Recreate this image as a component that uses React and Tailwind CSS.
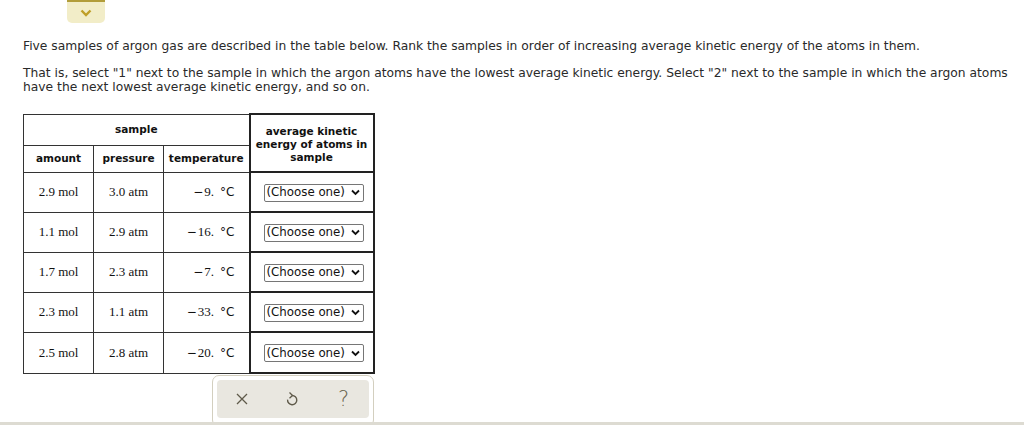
import React from "react";

const rows = [
  ["2.9 mol", "3.0 atm", "9."],
  ["1.1 mol", "2.9 atm", "16."],
  ["1.7 mol", "2.3 atm", "7."],
  ["2.3 mol", "1.1 atm", "33."],
  ["2.5 mol", "2.8 atm", "20."],
];

function Select() {
  return (
    <div className="inline-flex items-center h-[18px] w-[100px] border border-[#767676] rounded-[2px] bg-white pl-[2px] pr-[3px] text-[11.8px] text-[#111] font-['DejaVu_Sans',sans-serif] leading-none">
      <span className="flex-1 text-left">(Choose one)</span>
      <svg width="9" height="7" viewBox="0 0 9 7" className="ml-[1px]">
        <path d="M1 1.5 L4.5 5 L8 1.5" fill="none" stroke="#111" strokeWidth="1.8" />
      </svg>
    </div>
  );
}

export default function App() {
  return (
    <div className="relative w-[1024px] h-[425px] bg-white overflow-hidden font-['DejaVu_Sans',Verdana,sans-serif] text-[#2a2a2a]">
      <div className="ml-[67px] w-[38px] h-[23px] bg-[#f2edc8] rounded-b-[5px] border-t-[2px] border-[#b29d3a] flex items-center justify-center">
        <svg width="12" height="8" viewBox="0 0 12 8">
          <path d="M1.5 1.5 L6 6 L10.5 1.5" fill="none" stroke="#bf9f28" strokeWidth="2.4" />
        </svg>
      </div>
      <div className="pl-[23px] pr-[10px] text-[12.3px] leading-[14px]">
        <p className="mt-[16px]">Five samples of argon gas are described in the table below. Rank the samples in order of increasing average kinetic energy of the atoms in them.</p>
        <p className="mt-[13px]">That is, select "1" next to the sample in which the argon atoms have the lowest average kinetic energy. Select "2" next to the sample in which the argon atoms have the next lowest average kinetic energy, and so on.</p>
      </div>
      <table className="ml-[23px] mt-[19px] border-collapse border border-[#333] text-[#111]">
        <thead>
          <tr className="h-[31px]">
            <th colSpan={3} className="border border-[#333] text-[10.5px] font-bold align-top pt-[7px]">sample</th>
            <th rowSpan={2} className="w-[124px] border-2 border-[#222] text-[10.5px] font-bold leading-[13px] align-top pt-[10px]">
              average kinetic<br />energy of atoms in<br />sample
            </th>
          </tr>
          <tr className="h-[27px]">
            <th className="w-[70px] border border-[#333] text-[10.5px] font-bold">amount</th>
            <th className="w-[70px] border border-[#333] text-[10.5px] font-bold">pressure</th>
            <th className="w-[86px] border border-[#333] text-[10.5px] font-bold">temperature</th>
          </tr>
        </thead>
        <tbody className="font-['Liberation_Serif',serif] text-[13px]">
          {rows.map((r, i) => (
            <tr key={i} className={i === 4 ? "h-[41px]" : "h-[40px]"}>
              <td className="border border-[#333] text-center">{r[0]}</td>
              <td className="border border-[#333] text-center">{r[1]}</td>
              <td className="border border-[#333] text-right pr-[14px] whitespace-nowrap">
                <span className="font-['DejaVu_Sans',sans-serif] text-[12px] mr-[1px]">{"\u2212"}</span>
                <span>{r[2]}</span>
                <span className="font-['DejaVu_Sans',sans-serif] text-[12px] ml-[6px]">{"\u00b0C"}</span>
              </td>
              <td className="border-2 border-[#222] text-center pl-[4px]">
                <Select />
              </td>
            </tr>
          ))}
        </tbody>
      </table>
      <div className="absolute left-[212px] top-[375px] w-[162px] h-[52px] border border-[#d3cfbf] rounded-[7px] bg-white p-[4px]">
        <div className="h-[38px] bg-[#e9e7e0] rounded-[4px] grid grid-cols-3 items-center justify-items-center">
          <svg width="12" height="12" viewBox="0 0 12 12">
            <path d="M1 1 L11 11 M11 1 L1 11" stroke="#5f5a4a" strokeWidth="1.3" fill="none" />
          </svg>
          <svg width="13" height="16" viewBox="0 0 13 16">
            <path d="M3.5 1.5 L6.5 4.5 L3.5 7.3" stroke="#5f5a4a" strokeWidth="1.3" fill="none" />
            <path d="M6 4.5 A4.6 4.6 0 1 1 1.6 8.6" stroke="#5f5a4a" strokeWidth="1.4" fill="none" />
          </svg>
          <span className="text-[21px] leading-none text-[#6a654f] font-['DejaVu_Sans',sans-serif] font-extralight">?</span>
        </div>
      </div>
      <div className="absolute left-0 bottom-0 w-full h-[3px] bg-[#dddbd2]" />
    </div>
  );
}
